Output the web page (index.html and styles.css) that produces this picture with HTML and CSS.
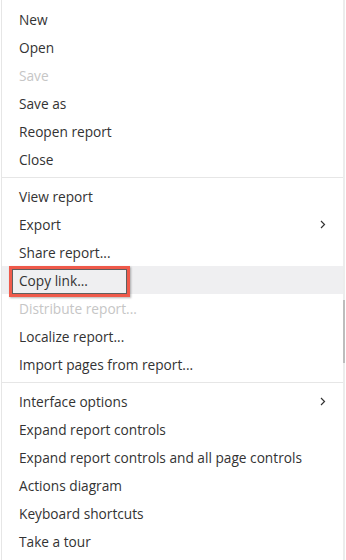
FILE: index.html
```html
<!DOCTYPE html>
<html>
<head>
<meta charset="utf-8">
<link rel="stylesheet" href="styles.css">
</head>
<body>
<div class="menu">
  <div class="group first">
    <div class="item">New</div>
    <div class="item">Open</div>
    <div class="item disabled">Save</div>
    <div class="item">Save as</div>
    <div class="item">Reopen report</div>
    <div class="item">Close</div>
  </div>
  <div class="group">
    <div class="item">View report</div>
    <div class="item sub">Export<svg class="chev" width="6" height="9" viewBox="0 0 6 9"><path d="M1 1 L4.5 4.5 L1 8" fill="none" stroke="#333" stroke-width="1.2"/></svg></div>
    <div class="item">Share report...</div>
    <div class="item hover"><span class="mark">Copy link...</span></div>
    <div class="item disabled">Distribute report...</div>
    <div class="item">Localize report...</div>
    <div class="item">Import pages from report...</div>
  </div>
  <div class="group last">
    <div class="item sub">Interface options<svg class="chev" width="6" height="9" viewBox="0 0 6 9"><path d="M1 1 L4.5 4.5 L1 8" fill="none" stroke="#333" stroke-width="1.2"/></svg></div>
    <div class="item">Expand report controls</div>
    <div class="item">Expand report controls and all page controls</div>
    <div class="item">Actions diagram</div>
    <div class="item">Keyboard shortcuts</div>
    <div class="item">Take a tour</div>
  </div>
  <div class="thumb"></div>
</div>
</body>
</html>
```
FILE: styles.css
```css
html, body {
  margin: 0;
  padding: 0;
  background: #ffffff;
}
body {
  width: 346px;
  height: 560px;
  overflow: hidden;
  font-family: "Open Sans", "Lato", sans-serif;
  font-size: 13.7px;
  color: #333333;
}
.menu {
  position: relative;
  margin-left: 1px;
  width: 341px;
  height: 560px;
  border-left: 1px solid #e6e6e6;
  border-right: 2px solid #ececec;
  box-sizing: content-box;
}
.group {
  padding: 4px 0;
  border-bottom: 1px solid #e6e6e6;
}
.group.first {
  padding-top: 5px;
}
.group.last {
  border-bottom: none;
}
.item {
  height: 28px;
  display: flex;
  align-items: center;
  justify-content: space-between;
  padding: 0 17px 0 17px;
  white-space: nowrap;
}
.item.disabled {
  color: #c6c6c6;
}
.item.hover {
  background: #efeff1;
  position: relative;
}
.chev {
  display: block;
}
.mark {
  display: block;
  margin-left: -10px;
  margin-top: 2px;
  width: 101px;
  height: 25px;
  line-height: 24px;
  padding: 0 7px;
  border: 3px solid #ef5a4b;
  box-shadow: inset 0 0 0 1px #5f5f5f, 1px 1px 2px rgba(0,0,0,0.3);
  box-sizing: content-box;
}
.thumb {
  position: absolute;
  right: -2px;
  top: 300px;
  width: 2px;
  height: 63px;
  background: #bdbdbd;
}
```
